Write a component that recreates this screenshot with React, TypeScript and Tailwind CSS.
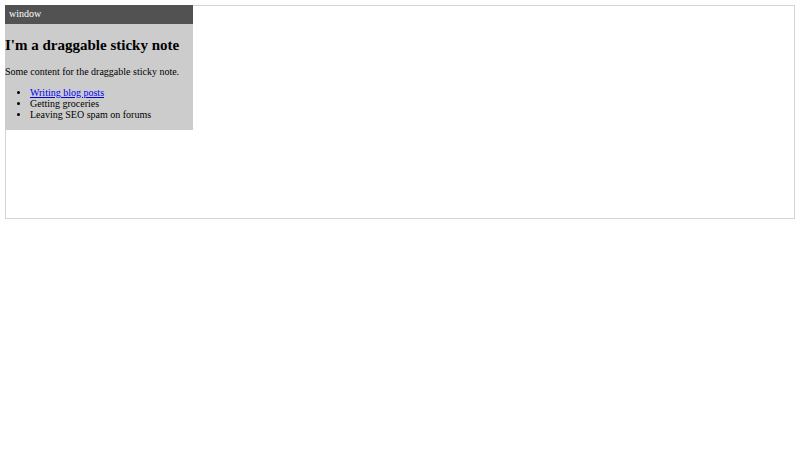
export default function App() {
    return (
        <div className="p-[5px] font-['Liberation_Serif',serif] text-[10px] leading-[1.107] text-black">
            {/* Drag area */}
            <div className="relative h-[214px] border border-[#d4d4d4] bg-white">
                {/* Sticky note window */}
                <div className="absolute -left-px -top-px w-[188px] bg-[#cccccc]">
                    <div className="h-[19px] bg-[#525252] px-[4px] pt-[3px] text-white">window</div>
                    <h2 className="my-[12.5px] text-[15px] font-bold">I'm a draggable sticky note</h2>
                    <p className="my-[10px]">Some content for the draggable sticky note.</p>
                    <ul className="my-[10px] list-disc pl-[25px]">
                        <li>
                            <a href="#" className="text-[#0000ee] underline">
                                Writing blog posts
                            </a>
                        </li>
                        <li>Getting groceries</li>
                        <li>Leaving SEO spam on forums</li>
                    </ul>
                </div>
            </div>
        </div>
    );
}
